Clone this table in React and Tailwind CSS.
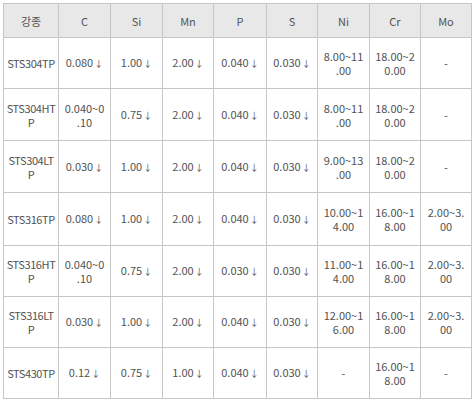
const cols = [
  { t: '강종', w: 'w-[55px]' },
  { t: 'C', w: 'w-[52px]' },
  { t: 'Si', w: 'w-[52px]' },
  { t: 'Mn', w: 'w-[51px]' },
  { t: 'P', w: 'w-[53px]' },
  { t: 'S', w: 'w-[51px]' },
  { t: 'Ni', w: 'w-[52px]' },
  { t: 'Cr', w: 'w-[51px]' },
  { t: 'Mo', w: 'w-[51px]' },
]

// '|' marks where the narrow cell wraps the value
const rows = [
  { h: 'h-[51px]', cells: ['STS304TP', '0.080↓', '1.00↓', '2.00↓', '0.040↓', '0.030↓', '8.00~11|.00', '18.00~2|0.00', '-'] },
  { h: 'h-[52px]', cells: ['STS304HT|P', '0.040~0|.10', '0.75↓', '2.00↓', '0.040↓', '0.030↓', '8.00~11|.00', '18.00~2|0.00', '-'] },
  { h: 'h-[52px]', cells: ['STS304LT|P', '0.030↓', '1.00↓', '2.00↓', '0.040↓', '0.030↓', '9.00~13|.00', '18.00~2|0.00', '-'] },
  { h: 'h-[53px]', cells: ['STS316TP', '0.080↓', '1.00↓', '2.00↓', '0.040↓', '0.030↓', '10.00~1|4.00', '16.00~1|8.00', '2.00~3.|00'] },
  { h: 'h-[51px]', cells: ['STS316HT|P', '0.040~0|.10', '0.75↓', '2.00↓', '0.030↓', '0.030↓', '11.00~1|4.00', '16.00~1|8.00', '2.00~3.|00'] },
  { h: 'h-[51px]', cells: ['STS316LT|P', '0.030↓', '1.00↓', '2.00↓', '0.040↓', '0.030↓', '12.00~1|6.00', '16.00~1|8.00', '2.00~3.|00'] },
  { h: 'h-[51px]', cells: ['STS430TP', '0.12↓', '0.75↓', '1.00↓', '0.040↓', '0.030↓', '-', '16.00~1|8.00', '-'] },
]

function Line({ text }) {
  const parts = text.split('↓')
  if (parts.length === 1) return text
  return (
    <>
      {parts[0]}
      <span className="text-[9px] ml-[1px]">↓</span>
    </>
  )
}

function Cell({ text }) {
  return text.split('|').map((l, i) => (
    <div key={i}>
      <Line text={l} />
    </div>
  ))
}

export default function App() {
  return (
    <div className="w-[474px] h-[401px] bg-white pt-[3px] pl-[3px] overflow-hidden font-['Noto_Sans_CJK_KR',sans-serif]">
      <table className="table-fixed border-collapse w-[469px] text-[11px] leading-[14px] text-[#525252]">
        <colgroup>
          {cols.map(c => (
            <col key={c.t} className={c.w} />
          ))}
        </colgroup>
        <thead>
          <tr>
            {cols.map(c => (
              <th key={c.t} className="h-[34px] bg-[#e8e8e8] border border-[#c6c6c6] font-normal text-center">
                {c.t}
              </th>
            ))}
          </tr>
        </thead>
        <tbody>
          {rows.map(r => (
            <tr key={r.cells[0]}>
              {r.cells.map((c, i) => (
                <td
                  key={i}
                  className={
                    i === 0
                      ? `${r.h} border border-[#c6c6c6] text-center align-middle whitespace-nowrap tracking-[-0.4px]`
                      : `${r.h} border border-[#c6c6c6] text-center align-middle whitespace-nowrap`
                  }
                >
                  <Cell text={c} />
                </td>
              ))}
            </tr>
          ))}
        </tbody>
      </table>
    </div>
  )
}
